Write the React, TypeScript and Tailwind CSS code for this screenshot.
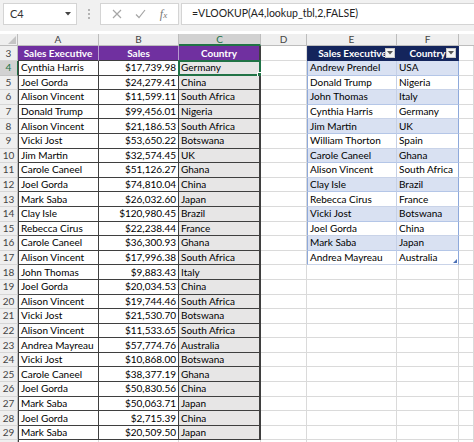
import React from "react";

const sales: [string, string, string][] = [
  ["Cynthia Harris", "$17,739.98", "Germany"],
  ["Joel Gorda", "$24,279.41", "China"],
  ["Alison Vincent", "$11,599.11", "South Africa"],
  ["Donald Trump", "$99,456.01", "Nigeria"],
  ["Alison Vincent", "$21,186.53", "South Africa"],
  ["Vicki Jost", "$53,650.22", "Botswana"],
  ["Jim Martin", "$32,574.45", "UK"],
  ["Carole Caneel", "$51,126.27", "Ghana"],
  ["Joel Gorda", "$74,810.04", "China"],
  ["Mark Saba", "$26,032.60", "Japan"],
  ["Clay Isle", "$120,980.45", "Brazil"],
  ["Rebecca Cirus", "$22,238.44", "France"],
  ["Carole Caneel", "$36,300.93", "Ghana"],
  ["Alison Vincent", "$17,996.38", "South Africa"],
  ["John Thomas", "$9,883.43", "Italy"],
  ["Joel Gorda", "$20,034.53", "China"],
  ["Alison Vincent", "$19,744.46", "South Africa"],
  ["Vicki Jost", "$21,530.70", "Botswana"],
  ["Alison Vincent", "$11,533.65", "South Africa"],
  ["Andrea Mayreau", "$57,774.76", "Australia"],
  ["Vicki Jost", "$10,868.00", "Botswana"],
  ["Carole Caneel", "$38,377.19", "Ghana"],
  ["Joel Gorda", "$50,830.56", "China"],
  ["Mark Saba", "$50,063.71", "Japan"],
  ["Joel Gorda", "$2,715.39", "China"],
  ["Mark Saba", "$20,509.50", "Japan"],
];

const lookup: [string, string][] = [
  ["Andrew Prendel", "USA"],
  ["Donald Trump", "Nigeria"],
  ["John Thomas", "Italy"],
  ["Cynthia Harris", "Germany"],
  ["Jim Martin", "UK"],
  ["William Thorton", "Spain"],
  ["Carole Caneel", "Ghana"],
  ["Alison Vincent", "South Africa"],
  ["Clay Isle", "Brazil"],
  ["Rebecca Cirus", "France"],
  ["Vicki Jost", "Botswana"],
  ["Joel Gorda", "China"],
  ["Mark Saba", "Japan"],
  ["Andrea Mayreau", "Australia"],
];

function FilterButton() {
  return (
    <div className="absolute right-[2px] top-[2px] flex h-[10px] w-[10px] items-center justify-center border border-[#c8c8c8] bg-[#f4f4f4]">
      <svg width="6" height="4" viewBox="0 0 6 4">
        <path d="M0 0h6L3 3.5z" fill="#555" />
      </svg>
    </div>
  );
}

function RowHead({ n, active }: { n: number; active?: boolean }) {
  return (
    <div
      className={
        "flex w-[18px] shrink-0 items-center justify-center border-b border-r text-[10px] " +
        (active
          ? "border-b-[#c6c6c6] border-r-[#217346] bg-[#d2d2d2] text-[#217346]"
          : "border-b-[#d6d6d6] border-r-[#bdbdbd] bg-[#efefef] text-[#444]")
      }
    >
      {n}
    </div>
  );
}

function Blank({ w }: { w: string }) {
  return <div className={w + " shrink-0 border-b border-r border-[#dadada]"} />;
}

export default function App() {
  return (
    <div
      className="h-[442px] w-[474px] overflow-hidden bg-white text-[10px] text-black"
      style={{ fontFamily: "Lato, 'Open Sans', sans-serif" }}
    >
      {/* formula bar */}
      <div className="flex h-[31px] items-center bg-[#f1f1f1] pb-[3px]">
        <div className="ml-[3px] flex h-[22px] w-[74px] items-center justify-between border border-[#d4d4d4] bg-white pl-[6px] pr-[5px] text-[11px] text-[#333]">
          <span>C4</span>
          <svg width="6" height="4" viewBox="0 0 6 4">
            <path d="M0 0h6L3 3.5z" fill="#444" />
          </svg>
        </div>
        <div className="flex w-[23px] flex-col items-center justify-center gap-[2px]">
          <div className="h-[2px] w-[2px] bg-[#b4b4b4]" />
          <div className="h-[2px] w-[2px] bg-[#b4b4b4]" />
          <div className="h-[2px] w-[2px] bg-[#b4b4b4]" />
        </div>
        <div className="flex h-[22px] w-[79px] items-center justify-around border border-[#d4d4d4] bg-white px-[4px]">
          <svg width="10" height="10" viewBox="0 0 10 10">
            <path d="M1 1l8 8M9 1l-8 8" stroke="#a6a6a6" strokeWidth="1.2" />
          </svg>
          <svg width="11" height="10" viewBox="0 0 11 10">
            <path d="M1 5.5l3 3L10 1" stroke="#a6a6a6" strokeWidth="1.2" fill="none" />
          </svg>
          <span
            className="text-[12px] italic text-[#777]"
            style={{ fontFamily: "'Liberation Serif', serif" }}
          >
            f<span className="text-[9px]">x</span>
          </span>
        </div>
        <div className="ml-[2px] flex h-[22px] flex-1 items-center border border-r-0 border-[#d4d4d4] bg-white pl-[10px] text-[10.5px] text-[#222]">
          =VLOOKUP(A4,lookup_tbl,2,FALSE)
        </div>
      </div>

      {/* column headers */}
      <div className="mt-[3px] flex h-[12px] text-[10px] text-[#444]">
        <div className="relative w-[18px] shrink-0 border-b border-r border-[#bdbdbd] bg-[#efefef]">
          <svg className="absolute bottom-[1px] right-[1px]" width="8" height="8" viewBox="0 0 8 8">
            <path d="M8 0v8H0z" fill="#c4c4c4" />
          </svg>
        </div>
        {[
          ["A", "w-[81px]"],
          ["B", "w-[80px]"],
          ["C", "w-[82px]"],
          ["D", "w-[46px]"],
          ["E", "w-[90px]"],
          ["F", "w-[62px]"],
        ].map(([l, w]) => (
          <div
            key={l}
            className={
              w +
              " flex shrink-0 items-center justify-center border-r " +
              (l === "C"
                ? "border-b-2 border-b-[#217346] border-r-[#bdbdbd] bg-[#d2d2d2] text-[#217346]"
                : "border-b border-[#bdbdbd] bg-[#efefef]")
            }
          >
            {l}
          </div>
        ))}
        <div className="flex-1 border-b border-[#bdbdbd] bg-[#efefef]" />
      </div>

      {/* row 3: headers */}
      <div className="flex h-[15px]">
        <RowHead n={3} />
        <div className="flex w-[81px] shrink-0 items-center justify-center border-r border-b border-r-[#b79bd0] border-b-[#3f3f3f] bg-[#7030a0] font-bold text-white">
          Sales Executive
        </div>
        <div className="flex w-[80px] shrink-0 items-center justify-center border-r border-b border-r-[#b79bd0] border-b-[#3f3f3f] bg-[#7030a0] font-bold text-white">
          Sales
        </div>
        <div className="flex w-[82px] shrink-0 items-center justify-center border-r-2 border-b border-r-[#3f3f3f] border-b-[#3f3f3f] bg-[#7030a0] font-bold text-white">
          Country
        </div>
        <Blank w="w-[46px]" />
        <div className="relative flex w-[90px] shrink-0 items-center justify-center overflow-hidden whitespace-nowrap border-l border-[#1d2e66] bg-[#14255c] font-bold text-white">
          Sales Executive
          <FilterButton />
        </div>
        <div className="relative flex w-[62px] shrink-0 items-center justify-center overflow-hidden whitespace-nowrap border-r border-[#1d2e66] bg-[#14255c] font-bold text-white">
          Country
          <FilterButton />
        </div>
        <Blank w="flex-1" />
      </div>

      {/* data rows */}
      {sales.map((r, i) => {
        const rowNo = i + 4;
        const lk = lookup[i];
        const band = i % 2 === 0;
        const last = i === lookup.length - 1;
        return (
          <div key={rowNo} className="flex h-[14.6px]">
            <RowHead n={rowNo} active={rowNo === 4} />
            <div className="flex w-[81px] shrink-0 items-center overflow-hidden whitespace-nowrap border-b border-l border-r border-[#3f3f3f] pl-[2px]">
              {r[0]}
            </div>
            <div className="flex w-[80px] shrink-0 items-center justify-end overflow-hidden whitespace-nowrap border-b border-r border-[#3f3f3f] pr-[2px]">
              {r[1]}
            </div>
            <div className="relative flex w-[82px] shrink-0 items-center whitespace-nowrap border-b border-r-2 border-[#3f3f3f] bg-[#e7e6e6] pl-[2px]">
              {r[2]}
              {rowNo === 4 && (
                <div className="absolute -bottom-[1px] -left-[1px] -right-[2px] -top-[1px] border-2 border-[#217346]">
                  <div className="absolute -bottom-[3px] -right-[3px] h-[5px] w-[5px] border border-white bg-[#217346]" />
                </div>
              )}
            </div>
            <Blank w="w-[46px]" />
            {lk ? (
              <>
                <div
                  className={
                    "flex w-[90px] shrink-0 items-center whitespace-nowrap border-l border-r border-b border-l-[#8ea9db] border-r-[#c5d0e6] pl-[2px] " +
                    (band ? "border-b-[#b4c6e7] bg-[#d9e1f2]" : "border-b-[#c9d3e8] bg-white") +
                    (last ? " border-b-[#8ea9db]" : "")
                  }
                >
                  {lk[0]}
                </div>
                <div
                  className={
                    "relative flex w-[62px] shrink-0 items-center whitespace-nowrap border-r border-b border-r-[#8ea9db] pl-[2px] " +
                    (band ? "border-b-[#b4c6e7] bg-[#d9e1f2]" : "border-b-[#c9d3e8] bg-white") +
                    (last ? " border-b-[#8ea9db]" : "")
                  }
                >
                  {lk[1]}
                  {last && (
                    <svg className="absolute bottom-[1px] right-[1px]" width="4" height="4" viewBox="0 0 4 4">
                      <path d="M4 0v4H0z" fill="#4a6fb5" />
                    </svg>
                  )}
                </div>
              </>
            ) : (
              <>
                <Blank w="w-[90px]" />
                <Blank w="w-[62px]" />
              </>
            )}
            <Blank w="flex-1" />
          </div>
        );
      })}

      {/* row 30 (partial) */}
      <div className="flex h-[14.6px]">
        <RowHead n={30} />
        <div className="w-[81px] shrink-0 border-b border-l border-r border-[#dadada] border-l-[#3f3f3f]" />
        <Blank w="w-[80px]" />
        <Blank w="w-[82px]" />
        <Blank w="w-[46px]" />
        <Blank w="w-[90px]" />
        <Blank w="w-[62px]" />
        <Blank w="flex-1" />
      </div>
    </div>
  );
}
